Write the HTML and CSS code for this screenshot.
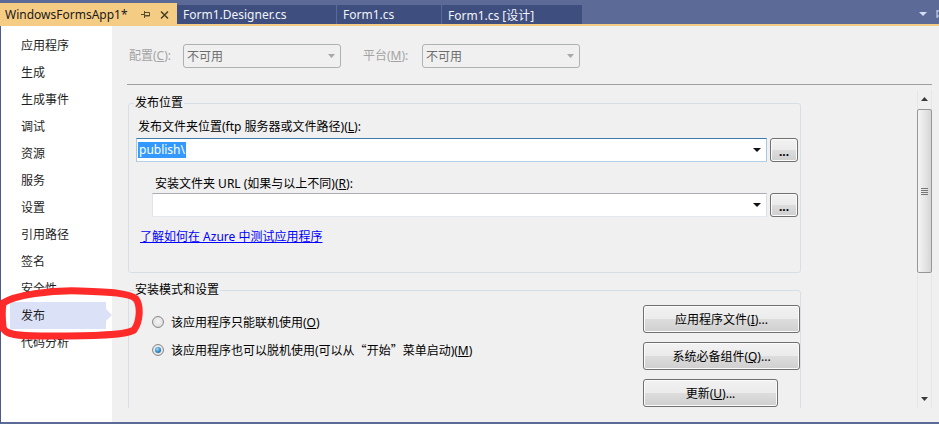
FILE: index.html
```html
<!DOCTYPE html>
<html lang="zh-CN">
<head>
    <meta charset="UTF-8">
    <meta name="viewport" content="width=device-width, initial-scale=1.0">
    <title>WindowsFormsApp1 - 发布</title>
    <link rel="stylesheet" href="styles.css">
</head>
<body>

    <div class="window">

        <!-- Tab dokumen -->
        <div class="tabbar">
            <div class="tab active">
                <span class="tab-title">WindowsFormsApp1*</span>
                <svg class="pin" width="9" height="7" viewBox="0 0 9 7">
                    <path d="M0 3.5h3.5M3.5 0v7M3.5 1.5h5v3.5h-5M3.5 4.5h5" stroke="#5b4b2c" stroke-width="1" fill="none"/>
                </svg>
                <svg class="close" width="9" height="8" viewBox="0 0 9 8">
                    <path d="M1 0.5l7 7M8 0.5l-7 7" stroke="#4b3e26" stroke-width="1.5" fill="none"/>
                </svg>
            </div>
            <div class="tab tab-designer">Form1.Designer.cs</div>
            <div class="tab tab-code">Form1.cs</div>
            <div class="tab tab-design">Form1.cs [设计]</div>
            <div class="tab-tools">
                <svg width="8" height="4" viewBox="0 0 8 4"><path d="M0 0h8L4 4z" fill="#d6ddf2"/></svg>
                <svg class="tool-cut" width="8" height="8" viewBox="0 0 8 8"><path d="M1 0v8M1 1h6v5H1" stroke="#d6ddf2" fill="none"/></svg>
            </div>
        </div>

        <div class="body">

            <!-- Menu kiri -->
            <ul class="sidebar">
                <li>应用程序</li>
                <li>生成</li>
                <li>生成事件</li>
                <li>调试</li>
                <li>资源</li>
                <li>服务</li>
                <li>设置</li>
                <li>引用路径</li>
                <li>签名</li>
                <li>安全性</li>
                <li class="selected">发布</li>
                <li>代码分析</li>
            </ul>

            <div class="page">

                <!-- Konfigurasi -->
                <div class="config-row">
                    <span class="cfg-label cfg-config">配置(<u>C</u>):</span>
                    <div class="cfg-combo">
                        <span>不可用</span>
                        <svg width="7" height="4" viewBox="0 0 7 4"><path d="M0 0h7L3.5 4z" fill="#a8a8a8"/></svg>
                    </div>
                    <span class="cfg-label cfg-platform">平台(<u>M</u>):</span>
                    <div class="cfg-combo">
                        <span>不可用</span>
                        <svg width="7" height="4" viewBox="0 0 7 4"><path d="M0 0h7L3.5 4z" fill="#a8a8a8"/></svg>
                    </div>
                </div>

                <div class="separator"></div>

                <div class="scroll-area">
                    <div class="scroll-content">

                        <fieldset class="group group-location">
                            <legend>发布位置</legend>
                            <div class="field-label">发布文件夹位置(ftp 服务器或文件路径)(<u>L</u>):</div>
                            <div class="path-row">
                                <div class="path-input focused">
                                    <span class="selected-text">publish\</span>
                                    <svg width="8" height="4" viewBox="0 0 8 4"><path d="M0 0h8L4 4z" fill="#111"/></svg>
                                </div>
                                <button class="browse-btn">...</button>
                            </div>
                            <div class="field-label label-url">安装文件夹 URL (如果与以上不同)(<u>R</u>):</div>
                            <div class="path-row row-url">
                                <div class="path-input">
                                    <span></span>
                                    <svg width="8" height="4" viewBox="0 0 8 4"><path d="M0 0h8L4 4z" fill="#111"/></svg>
                                </div>
                                <button class="browse-btn">...</button>
                            </div>
                            <a class="azure-link" href="#">了解如何在 Azure 中测试应用程序</a>
                        </fieldset>

                        <fieldset class="group group-install">
                            <legend>安装模式和设置</legend>
                            <div class="install-row">
                                <div class="radios">
                                    <div class="radio-row">
                                        <span class="radio"></span>
                                        <span>该应用程序只能联机使用(<u>O</u>)</span>
                                    </div>
                                    <div class="radio-row">
                                        <span class="radio checked"></span>
                                        <span>该应用程序也可以脱机使用(可以从<span class="cjk">“</span>开始<span class="cjk">”</span>菜单启动)(<u>M</u>)</span>
                                    </div>
                                </div>
                                <div class="action-buttons">
                                    <button class="win-btn">应用程序文件(<u>I</u>)...</button>
                                    <button class="win-btn">系统必备组件(<u>Q</u>)...</button>
                                    <button class="win-btn btn-short">更新(<u>U</u>)...</button>
                                </div>
                            </div>
                        </fieldset>

                    </div>

                    <!-- Scrollbar -->
                    <div class="scrollbar">
                        <div class="sb-arrow">
                            <svg width="7" height="4" viewBox="0 0 7 4"><path d="M3.5 0L7 4H0z" fill="#3a3a3a"/></svg>
                        </div>
                        <div class="sb-thumb">
                            <span class="grip"></span>
                        </div>
                        <div class="sb-track"></div>
                        <div class="sb-arrow">
                            <svg width="7" height="4" viewBox="0 0 7 4"><path d="M0 0h7L3.5 4z" fill="#3a3a3a"/></svg>
                        </div>
                    </div>
                </div>

            </div>
        </div>

        <!-- Lingkaran merah -->
        <svg class="red-mark" width="150" height="70" viewBox="0 0 150 70">
            <path d="M3 23 C15 15, 50 10, 80 11 C110 12, 130 13, 136 19 C141 26, 140 42, 134 50 C125 56, 80 56, 40 56 C20 56, 4 55, 3 47 C2 38, 2 30, 3 23 Z" stroke="#ff2a2a" stroke-width="7" fill="none" stroke-linejoin="round"/>
        </svg>

    </div>

</body>
</html>
```

FILE: styles.css
```css
/* Dasar */
body {
    margin: 0;
    font-family: "Noto Sans", "Noto Sans CJK SC", sans-serif;
    font-size: 12px;
    color: #000;
}

.window {
    position: relative;
    width: 939px;
    height: 424px;
    overflow: hidden;
    background: #f0f0f0;
}

.cjk {
    font-family: "Noto Sans CJK SC", sans-serif;
}

/* Tab dokumen */
.tabbar {
    display: flex;
    align-items: flex-end;
    height: 24px;
    background: #5c6a97;
    border-bottom: 2px solid #f5cc84;
    overflow: hidden;
}

.tab {
    display: flex;
    align-items: center;
    height: 19px;
    margin-left: 1px;
    padding-left: 6px;
    box-sizing: border-box;
    background: #3e4e7e;
    color: #f2f4fa;
    white-space: nowrap;
}

.tab.active {
    width: 177px;
    height: 21px;
    margin-left: 0;
    padding: 2px 8px 0 5px;
    background: #f5cc84;
    color: #1a1a1a;
}

.tab.active + .tab {
    margin-left: 0;
}

.tab-designer { width: 159px; }
.tab-code { width: 104px; }
.tab-design { width: 140px; }

.pin {
    margin-left: auto;
}

.close {
    margin-left: 10px;
}

.tab-tools {
    display: flex;
    align-items: center;
    gap: 9px;
    height: 24px;
    margin-left: auto;
    margin-right: -5px;
    padding-top: 4px;
    box-sizing: border-box;
}

/* Isi */
.body {
    display: flex;
    height: 398px;
    border-left: 1px solid #4c5a8a;
    border-bottom: 2px solid #5c6a97;
    box-sizing: border-box;
}

.sidebar {
    width: 111px;
    margin: 0;
    padding: 6px 0 0;
    list-style: none;
    background: #fff;
}

.sidebar li {
    position: relative;
    width: 96px;
    height: 27px;
    margin-left: 9px;
    padding-left: 11px;
    box-sizing: border-box;
    line-height: 27px;
    color: #1e1e1e;
}

.sidebar li.selected {
    background: #dbe1f7;
}

.sidebar li.selected::after {
    content: "";
    position: absolute;
    top: 7px;
    right: -6px;
    border-top: 6.5px solid transparent;
    border-bottom: 6.5px solid transparent;
    border-left: 6px solid #dbe1f7;
}

.page {
    flex: 1;
    display: flex;
    flex-direction: column;
    background: #f0f0f0;
}

/* Konfigurasi */
.config-row {
    display: flex;
    align-items: center;
    height: 24px;
    padding: 18px 0 0 17px;
}

.cfg-label {
    color: #a3a3a3;
    line-height: 16px;
}

.cfg-config { width: 54px; }

.cfg-platform {
    width: 59px;
    margin-left: 22px;
}

.cfg-combo {
    display: flex;
    align-items: center;
    justify-content: space-between;
    width: 158px;
    height: 24px;
    padding: 0 5px 0 3px;
    box-sizing: border-box;
    border: 1px solid #adb2b5;
    border-radius: 3px;
    color: #6d6d6d;
}

.separator {
    height: 1px;
    margin: 16px 7px 0 15px;
    background: #a0a0a0;
}

/* Area gulir */
.scroll-area {
    display: flex;
    height: 318px;
    margin: 5px 7px 0 0;
    overflow: hidden;
}

.scroll-content {
    flex: 1;
    padding-left: 16px;
    overflow: hidden;
}

.group {
    width: 673px;
    margin: 5px 0 0;
    padding: 8px 2px 27px 7px;
    box-sizing: border-box;
    border: 1px solid #d5dfe5;
    border-radius: 3px;
}

.group legend {
    margin-left: -2px;
    padding: 0 1px;
    line-height: 16px;
}

.field-label {
    height: 16px;
    padding-left: 2px;
    line-height: 16px;
    white-space: nowrap;
}

.label-url {
    margin-top: 14px;
    padding-left: 19px;
}

.path-row {
    display: flex;
    gap: 3px;
    margin-top: 3px;
}

.row-url {
    margin-top: 1px;
    padding-left: 16px;
}

.path-input {
    flex: 1;
    display: flex;
    align-items: center;
    justify-content: space-between;
    height: 24px;
    padding: 0 5px 0 1px;
    box-sizing: border-box;
    background: #fff;
    border: 1px solid;
    border-color: #abadb3 #dbdfe6 #e3e9ef #e2e3ea;
}

.path-input.focused {
    border-color: #3d7bad #a4c9e3 #b5cfe7 #a4c9e3;
}

.selected-text {
    padding: 0 1px;
    background: #3399ff;
    color: #fff;
    line-height: 16px;
}

.browse-btn,
.win-btn {
    font-family: inherit;
    font-size: 12px;
    color: #000;
    border: 1px solid #707070;
    border-radius: 3px;
    background: linear-gradient(#f2f2f2 0%, #ebebeb 50%, #dddddd 50%, #cfcfcf 100%);
    box-shadow: inset 0 0 0 1px #fbfbfb;
    padding: 0;
}

.browse-btn {
    width: 28px;
    height: 24px;
    padding-top: 4px;
    line-height: 12px;
    font-weight: bold;
}

.azure-link {
    display: block;
    margin-top: 12px;
    padding-left: 4px;
    line-height: 16px;
    color: #0000ff;
}

.group-install {
    margin-top: 9px;
    padding: 7px 0 20px 7px;
}

.install-row {
    display: flex;
    justify-content: space-between;
}

.radios {
    padding-top: 3px;
}

.radio-row {
    display: flex;
    align-items: center;
    height: 28px;
    padding-left: 16px;
}

.radio {
    position: relative;
    width: 12px;
    height: 12px;
    margin-right: 7px;
    box-sizing: border-box;
    border: 1px solid #8a8a8a;
    border-radius: 50%;
    background: radial-gradient(circle at 50% 45%, #f6f6f6 0%, #e2e2e2 60%, #c9c9c9 100%);
}

.radio.checked::after {
    content: "";
    position: absolute;
    top: 2px;
    left: 2px;
    width: 6px;
    height: 6px;
    border-radius: 50%;
    background: radial-gradient(circle at 40% 35%, #a6dcf8 0%, #2f86c6 55%, #0f4a80 100%);
}

.action-buttons {
    display: flex;
    flex-direction: column;
    align-items: flex-start;
    gap: 9px;
    width: 157px;
}

.win-btn {
    width: 157px;
    height: 28px;
}

.btn-short {
    width: 135px;
}

/* Scrollbar */
.scrollbar {
    display: flex;
    flex-direction: column;
    width: 15px;
    box-sizing: border-box;
    border-left: 1px solid #e6e6e6;
    border-right: 1px solid #e6e6e6;
    background: #f0f0f0;
}

.sb-arrow {
    display: flex;
    align-items: center;
    justify-content: center;
    height: 18px;
}

.sb-thumb {
    display: flex;
    align-items: center;
    justify-content: center;
    height: 162px;
    margin: 1px -1px 0;
    border: 1px solid #979797;
    border-radius: 2px;
    background: linear-gradient(to right, #f4f4f4 0%, #e6e6e6 50%, #d6d6d6 100%);
}

.grip {
    width: 7px;
    height: 7px;
    background: repeating-linear-gradient(#777 0 1px, transparent 1px 2px);
}

.sb-track {
    flex: 1;
}

/* Lingkaran merah */
.red-mark {
    position: absolute;
    top: 280px;
    left: 0;
}
```
